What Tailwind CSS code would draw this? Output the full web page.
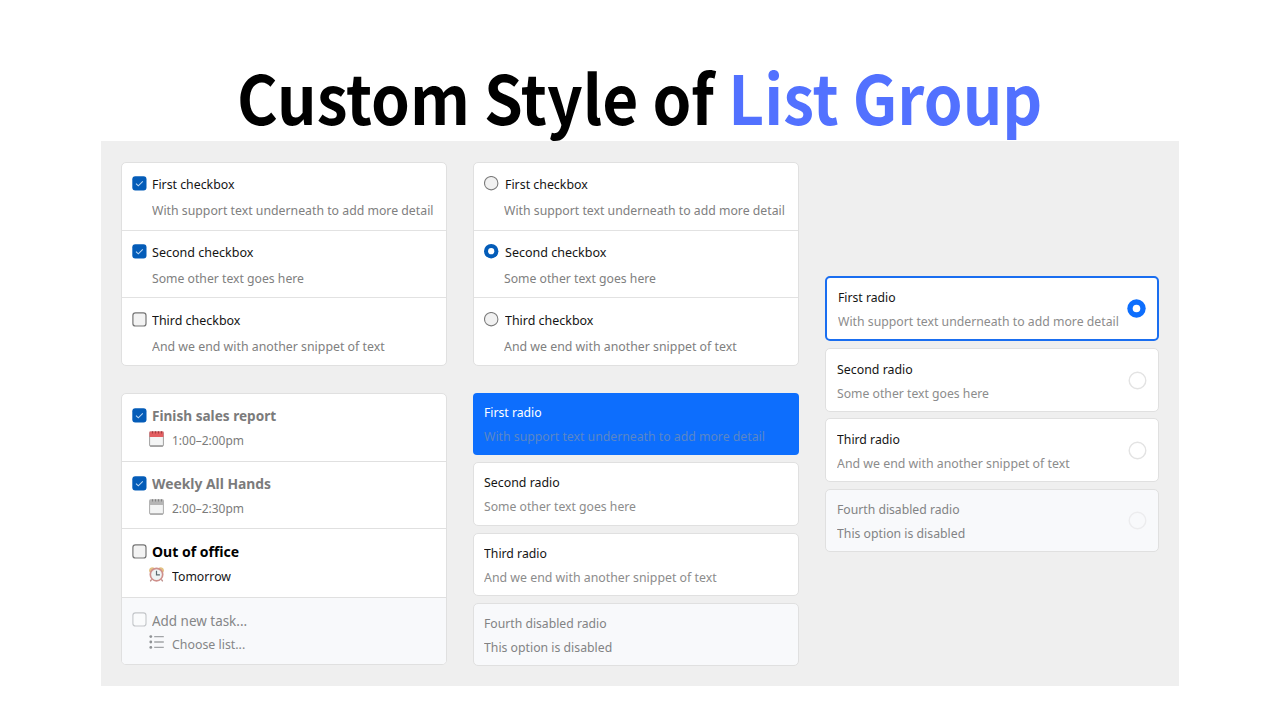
<!DOCTYPE html>
<html lang="en">
<head>
<meta charset="utf-8">
<title>Custom Style of List Group</title>
<script src="https://cdn.jsdelivr.net/npm/@tailwindcss/browser@4"></script>
</head>
<body class="bg-white w-[1280px] h-[720px] overflow-hidden font-['Noto_Sans',sans-serif] text-[13.3px] leading-5 text-[#141414]">
<svg class="hidden">
  <symbol id="checked" viewBox="0 0 15 15"><rect x=".3" y=".3" width="14.2" height="14.2" rx="3" fill="#045cb8"/><path d="M4 7.6l2.3 2.2 4.5-4.4" fill="none" stroke="#b9d6f3" stroke-width="1.1"/></symbol>
  <symbol id="unchecked" viewBox="0 0 15 15"><rect x=".9" y=".9" width="13.1" height="13.1" rx="2.6" fill="#f3f3f3" stroke="#767676" stroke-width="1.2"/></symbol>
  <symbol id="faded" viewBox="0 0 15 15"><rect x=".9" y=".9" width="13.1" height="13.1" rx="2.6" fill="#fafbfc" stroke="#c3c6c9" stroke-width="1.1"/></symbol>
  <symbol id="radio" viewBox="0 0 15 15"><circle cx="7.2" cy="7.2" r="6.7" fill="#f1f1f1" stroke="#7b7b7b" stroke-width="1.1"/></symbol>
  <symbol id="radio-on" viewBox="0 0 15 15"><circle cx="7.2" cy="7.2" r="7.2" fill="#045cb8"/><circle cx="7.2" cy="7.2" r="3.1" fill="#fff"/></symbol>
  <symbol id="clock" viewBox="0 0 17 17"><path d="M1 5.6Q.7 1.2 5.2 1.3L6.6 2.4 2.6 6.3zM16 5.6Q16.3 1.2 11.8 1.3L10.4 2.4 14.4 6.3z" fill="#e3c283"/><path d="M3.6 13.4l-1.3 2M13.4 13.4l1.3 2" stroke="#b98a86" stroke-width="1.3"/><circle cx="8.5" cy="8.6" r="6.2" fill="#eef3f3" stroke="#cf8f8b" stroke-width="1.7"/><path d="M8.5 4.8v4.1h3.4" fill="none" stroke="#59686d" stroke-width="1.2"/></symbol>
  <symbol id="list" viewBox="0 0 16 16"><g fill="#8f9295"><circle cx="1.8" cy="2.6" r="1.4"/><circle cx="1.8" cy="8" r="1.4"/><circle cx="1.8" cy="13.4" r="1.4"/></g><path d="M5.2 2.6h9.6M5.2 8h9.6M5.2 13.4h9.6" stroke="#a2a5a8" stroke-width="1.3"/></symbol>
</svg>

<h1 class="h-[141px] pt-[46px] pl-[237px] font-['Noto_Sans_CJK_SC',sans-serif] font-bold text-[67.5px] leading-[100px] text-black whitespace-nowrap"><span class="inline-block origin-left scale-x-[0.921]">Custom Style of <span class="text-[#5271ff]">List Group</span></span></h1>

<main class="ml-[101px] w-[1078px] h-[545px] bg-[#efefef] pl-5 pt-[21px] flex whitespace-nowrap">

  <div class="w-[326px] flex flex-col gap-[27px]">
    <section class="h-[204px] bg-white border border-[#e0e0e0] rounded-[5px]">
      <div class="h-[68px] pl-[9.5px] pt-[11px] border-b border-[#e2e2e2]">
        <div class="flex gap-[5px]"><svg class="size-[15px] mt-[1.5px]"><use href="#checked"/></svg><span class="origin-left scale-x-[0.926]">First checkbox</span></div>
        <p class="mt-[6px] ml-5 text-[#808080] origin-left scale-x-[0.924]">With support text underneath to add more detail</p>
      </div>
      <div class="h-[67px] pl-[9.5px] pt-[11px] border-b border-[#e2e2e2]">
        <div class="flex gap-[5px]"><svg class="size-[15px] mt-[1.5px]"><use href="#checked"/></svg><span class="origin-left scale-x-[0.942]">Second checkbox</span></div>
        <p class="mt-[6px] ml-5 text-[#808080] origin-left scale-x-[0.918]">Some other text goes here</p>
      </div>
      <div class="pl-[9.5px] pt-[12px]">
        <div class="flex gap-[5px]"><svg class="size-[15px] mt-[1.5px]"><use href="#unchecked"/></svg><span class="origin-left scale-x-[0.936]">Third checkbox</span></div>
        <p class="mt-[6px] ml-5 text-[#808080] origin-left scale-x-[0.928]">And we end with another snippet of text</p>
      </div>
    </section>

    <section class="h-[272px] bg-white border border-[#e0e0e0] rounded-[5px] overflow-hidden">
      <div class="h-[68px] pl-[9.5px] pt-[12px] border-b border-[#e0e0e0] text-[#7b7b7b]">
        <div class="flex gap-[5px]"><svg class="size-[15px] mt-[2px]"><use href="#checked"/></svg><b class="text-[14.3px] origin-left scale-x-[0.951]">Finish sales report</b></div>
        <div class="mt-1 ml-[17px] flex gap-2">
          <svg class="w-[15px] h-[17px]" viewBox="0 0 15 17"><rect x=".6" y="2" width="13.8" height="14.3" rx="1" fill="#f4f5f5" stroke="#a0a0a0" stroke-width="1"/><path d="M.5 1.5h14v5.4H.5z" fill="#e25d60"/><path d="M1 15.9h13" stroke="#969696" stroke-width="1.2"/><path d="M3.5 1.3v2.2M6.5 1.3v2.2M9.5 1.3v2.2M12.5 1.3v2.2" stroke="#a53c40" stroke-width="1.1"/></svg>
          <span class="origin-left scale-x-[0.9]">1:00–2:00pm</span></div>
      </div>
      <div class="h-[67px] pl-[9.5px] pt-[12px] border-b border-[#e0e0e0] text-[#7b7b7b]">
        <div class="flex gap-[5px]"><svg class="size-[15px] mt-[2px]"><use href="#checked"/></svg><b class="text-[14.3px] origin-left scale-x-[0.97]">Weekly All Hands</b></div>
        <div class="mt-1 ml-[17px] flex gap-2">
          <svg class="w-[15px] h-[17px]" viewBox="0 0 15 17"><rect x=".6" y="2" width="13.8" height="14.3" rx="1" fill="#f3f4f4" stroke="#aaa" stroke-width="1"/><path d="M.5 1.5h14v5.4H.5z" fill="#b5b5b5"/><path d="M1 15.9h13" stroke="#a2a2a2" stroke-width="1.2"/><path d="M3.5 1.3v2.2M6.5 1.3v2.2M9.5 1.3v2.2M12.5 1.3v2.2" stroke="#838383" stroke-width="1.1"/></svg>
          <span class="origin-left scale-x-[0.9]">2:00–2:30pm</span></div>
      </div>
      <div class="h-[69px] pl-[9.5px] pt-[13px] border-b border-[#e0e0e0]">
        <div class="flex gap-[5px]"><svg class="size-[15px] mt-[2px]"><use href="#unchecked"/></svg><b class="text-[14.3px] text-black origin-left scale-x-[0.98]">Out of office</b></div>
        <div class="mt-1 ml-4 flex gap-[7px]"><svg class="size-[17px]"><use href="#clock"/></svg><span class="origin-left scale-x-[0.922]">Tomorrow</span></div>
      </div>
      <div class="h-[67px] pl-[9.5px] pt-[12px] bg-[#f8f9fb] text-[#858687]">
        <div class="flex gap-[5px]"><svg class="size-[15px] mt-[2px]"><use href="#faded"/></svg><span class="pt-px text-[14.3px] origin-left scale-x-[0.94]">Add new task...</span></div>
        <div class="mt-[3px] ml-[17px] flex gap-[7px]"><svg class="size-4"><use href="#list"/></svg><span class="origin-left scale-x-[0.93]">Choose list...</span></div>
      </div>
    </section>
  </div>

  <div class="ml-[26px] w-[326px]">
    <section class="h-[204px] bg-white border border-[#e0e0e0] rounded-[5px]">
      <div class="h-[68px] pl-[10px] pt-[11px] border-b border-[#e2e2e2]">
        <div class="flex gap-[6px]"><svg class="size-[15px] mt-[1.5px]"><use href="#radio"/></svg><span class="origin-left scale-x-[0.93]">First checkbox</span></div>
        <p class="mt-[6px] ml-5 text-[#808080] origin-left scale-x-[0.922]">With support text underneath to add more detail</p>
      </div>
      <div class="h-[67px] pl-[10px] pt-[11px] border-b border-[#e2e2e2]">
        <div class="flex gap-[6px]"><svg class="size-[15px] mt-[1.5px]"><use href="#radio-on"/></svg><span class="origin-left scale-x-[0.942]">Second checkbox</span></div>
        <p class="mt-[6px] ml-5 text-[#808080] origin-left scale-x-[0.918]">Some other text goes here</p>
      </div>
      <div class="pl-[10px] pt-[12px]">
        <div class="flex gap-[6px]"><svg class="size-[15px] mt-[1.5px]"><use href="#radio"/></svg><span class="origin-left scale-x-[0.936]">Third checkbox</span></div>
        <p class="mt-[6px] ml-5 text-[#808080] origin-left scale-x-[0.928]">And we end with another snippet of text</p>
      </div>
    </section>

    <section class="mt-[27px] flex flex-col gap-[7px]">
      <div class="h-[62px] pl-[11px] pt-[9px] rounded-[4px] bg-[#0d6efd] text-white">
        <p class="origin-left scale-x-[0.918]">First radio</p>
        <p class="mt-1 text-[#5b87c6] origin-left scale-x-[0.922]">With support text underneath to add more detail</p>
      </div>
      <div class="h-[64px] pl-[10px] pt-[9px] rounded-[5px] border border-[#e0e0e0] bg-white">
        <p class="origin-left scale-x-[0.93]">Second radio</p>
        <p class="mt-1 text-[#8c8c8c] origin-left scale-x-[0.918]">Some other text goes here</p>
      </div>
      <div class="h-[63px] pl-[10px] pt-[9px] rounded-[5px] border border-[#e0e0e0] bg-white">
        <p class="origin-left scale-x-[0.922]">Third radio</p>
        <p class="mt-1 text-[#8c8c8c] origin-left scale-x-[0.928]">And we end with another snippet of text</p>
      </div>
      <div class="h-[63px] pl-[10px] pt-[9px] rounded-[5px] border border-[#e0e0e0] bg-[#f8f9fb] text-[#828384]">
        <p class="origin-left scale-x-[0.917]">Fourth disabled radio</p>
        <p class="mt-1 origin-left scale-x-[0.922]">This option is disabled</p>
      </div>
    </section>
  </div>

  <div class="ml-[26px] mt-[114px] w-[334px] flex flex-col gap-[7px]">
    <div class="h-[65px] pl-[10.5px] pt-[9px] rounded-[5px] border-2 border-[#1a6ef0] bg-white flex">
      <div class="w-[289px]">
        <p class="origin-left scale-x-[0.918]">First radio</p>
        <p class="mt-1 text-[#8c8c8c] origin-left scale-x-[0.922]">With support text underneath to add more detail</p>
      </div>
      <svg class="size-[19px] mt-[12px] shrink-0" viewBox="0 0 19 19"><circle cx="9.5" cy="9.5" r="9.2" fill="#0d6efd"/><circle cx="9.5" cy="9.5" r="3.8" fill="#fff"/></svg>
    </div>
    <div class="h-[64px] pl-[10.5px] pt-[10px] rounded-[5px] border border-[#e0e0e0] bg-white flex">
      <div class="w-[291px]">
        <p class="origin-left scale-x-[0.93]">Second radio</p>
        <p class="mt-1 text-[#8c8c8c] origin-left scale-x-[0.918]">Some other text goes here</p>
      </div>
      <svg class="size-[19px] mt-[12px] shrink-0" viewBox="0 0 19 19"><circle cx="9.5" cy="9.5" r="8.3" fill="#fff" stroke="#e3e3e3" stroke-width="1.4"/></svg>
    </div>
    <div class="h-[64px] -mt-px pl-[10.5px] pt-[10px] rounded-[5px] border border-[#e0e0e0] bg-white flex">
      <div class="w-[291px]">
        <p class="origin-left scale-x-[0.922]">Third radio</p>
        <p class="mt-1 text-[#8c8c8c] origin-left scale-x-[0.928]">And we end with another snippet of text</p>
      </div>
      <svg class="size-[19px] mt-[12px] shrink-0" viewBox="0 0 19 19"><circle cx="9.5" cy="9.5" r="8.3" fill="#fff" stroke="#e3e3e3" stroke-width="1.4"/></svg>
    </div>
    <div class="h-[63px] pl-[10.5px] pt-[9px] rounded-[5px] border border-[#e0e0e0] bg-[#f8f9fb] text-[#828384] flex">
      <div class="w-[291px]">
        <p class="origin-left scale-x-[0.917]">Fourth disabled radio</p>
        <p class="mt-1 origin-left scale-x-[0.922]">This option is disabled</p>
      </div>
      <svg class="size-[19px] mt-[12px] shrink-0" viewBox="0 0 19 19"><circle cx="9.5" cy="9.5" r="8.3" fill="#f8f9fb" stroke="#ececee" stroke-width="1.4"/></svg>
    </div>
  </div>
</main>
</body>
</html>
